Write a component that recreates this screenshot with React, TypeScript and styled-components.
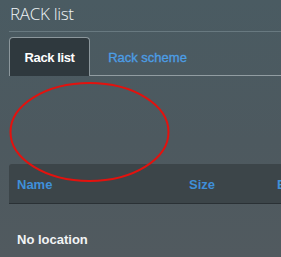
import React from "react";
import styled, { createGlobalStyle } from "styled-components";

const GlobalStyle = createGlobalStyle`
    html, body {
        margin: 0;
        padding: 0;
        height: 100%;
        overflow: hidden;
    }
    body {
        background: linear-gradient(180deg, #4a5b62 0%, #4d595f 55%, #515a5f 100%);
        font-family: "Open Sans", "Liberation Sans", Arial, sans-serif;
        color: #eef2f3;
    }
`;

const Page = styled.div`
    position: relative;
    width: 281px;
    height: 257px;
    overflow: hidden;
    padding: 0 0 0 9px;
    box-sizing: border-box;
`;

const Title = styled.h1`
    margin: 0;
    padding: 2px 0 0 1px;
    height: 32px;
    box-sizing: border-box;
    font-size: 17px;
    font-weight: 300;
    letter-spacing: -0.3px;
    line-height: 24px;
    color: #eef3f5;
    border-bottom: 1px solid #687980;
`;

const TabBar = styled.div`
    display: flex;
    margin-top: 5px;
    height: 38px;
    border-bottom: 1px solid #929da2;
`;

const Tab = styled.div<{ $active?: boolean }>`
    display: flex;
    align-items: center;
    justify-content: center;
    box-sizing: border-box;
    height: 39px;
    font-family: "Liberation Sans", Arial, sans-serif;
    font-size: 13px;
    font-weight: ${(p) => (p.$active ? 700 : 400)};
    letter-spacing: ${(p) => (p.$active ? "-0.4px" : "0")};
    -webkit-text-stroke: ${(p) => (p.$active ? "0" : "0.3px")};
    padding: 1px 0 0;
    color: ${(p) => (p.$active ? "#ffffff" : "#4b9ee6")};
    background: ${(p) => (p.$active ? "#2f393e" : "transparent")};
    border: 1px solid ${(p) => (p.$active ? "#8c979c" : "transparent")};
    border-bottom: none;
    border-radius: 4px 4px 0 0;
    width: ${(p) => (p.$active ? "81px" : "115px")};
`;

const TableHead = styled.div`
    display: grid;
    grid-template-columns: 172px 88px 80px;
    align-items: center;
    margin-top: 88px;
    height: 40px;
    box-sizing: border-box;
    padding: 1px 0 0 8px;
    background: #3c4549;
    border-bottom: 1px solid #2a3135;
    border-radius: 3px 0 0 0;
`;

const HeadCell = styled.span`
    font-family: "Liberation Sans", Arial, sans-serif;
    font-size: 13px;
    font-weight: 700;
    color: #3f8fd9;
    white-space: nowrap;
`;

const GroupRow = styled.div`
    padding: 28px 0 0 8px;
    font-family: "Liberation Sans", Arial, sans-serif;
    font-size: 13px;
    font-weight: 700;
    color: #f2f4f5;
`;

const Marker = styled.svg`
    position: absolute;
    left: 0;
    top: 0;
    pointer-events: none;
`;

const App = (): JSX.Element => {
    return (
        <>
            <GlobalStyle />
            <Page>
                <Title>RACK list</Title>
                <TabBar>
                    <Tab $active>Rack list</Tab>
                    <Tab>Rack scheme</Tab>
                </TabBar>
                <TableHead>
                    <HeadCell>Name</HeadCell>
                    <HeadCell>Size</HeadCell>
                    <HeadCell>E</HeadCell>
                </TableHead>
                <GroupRow>No location</GroupRow>
                <Marker width="281" height="257">
                    <ellipse cx="89.5" cy="132" rx="79" ry="49" fill="none" stroke="#e3120e" strokeWidth="2" />
                </Marker>
            </Page>
        </>
    );
};

export default App;
